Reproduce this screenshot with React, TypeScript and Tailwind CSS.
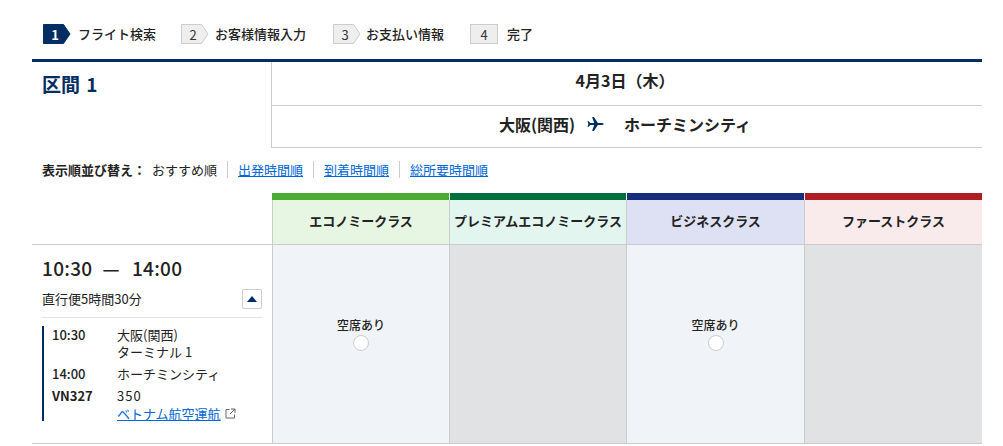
import React from "react";

const font = "font-['Noto_Sans_CJK_JP','Noto_Sans',sans-serif]";

function Step({ n, label, active, last, textGap }: { n: number; label: string; active?: boolean; last?: boolean; textGap: string }) {
  return (
    <div className="flex items-center">
      <div className="relative flex h-[20px] w-[28px] items-center justify-center">
        {last ? (
          <div className="absolute inset-0 border border-[#cccccc] bg-[#eeeeee]" />
        ) : (
          <svg className="absolute left-0 top-0" width="28" height="20" viewBox="0 0 28 20">
            <path
              d="M0.5 0.5H20.5L27 10L20.5 19.5H0.5Z"
              fill={active ? "#002e62" : "#eeeeee"}
              stroke={active ? "#002e62" : "#cccccc"}
            />
          </svg>
        )}
        <span className={`relative text-[13px] leading-none ${active ? "pr-1 font-bold text-white" : last ? "text-[#333333]" : "pr-1 text-[#333333]"}`}>{n}</span>
      </div>
      <span className={`${textGap} pb-[2px] text-[13px] font-medium leading-none text-[#222222]`}>{label}</span>
    </div>
  );
}

function ClassCol({ bar, bg, label, first }: { bar: string; bg: string; label: string; first?: boolean }) {
  return (
    <div className="flex flex-col">
      <div className={`h-[7px] ${bar} ${first ? "" : "ml-px"}`} />
      <div className={`flex h-[44px] items-center justify-center whitespace-nowrap border-l border-[#cccccc] pb-[3px] text-[13px] font-bold text-[#222222] ${bg}`}>
        {label}
      </div>
    </div>
  );
}

function Seat({ open }: { open: boolean }) {
  return (
    <div className={`flex flex-col items-center justify-center border-l border-[#cccccc] pb-[21px] ${open ? "bg-[#f0f3f8]" : "bg-[#e1e2e4]"}`}>
      {open && (
        <>
          <span className="text-[12px] font-medium leading-[18px] text-[#222222]">空席あり</span>
          <span className="mt-[1px] h-[16px] w-[16px] rounded-full border border-[#cccccc] bg-white" />
        </>
      )}
    </div>
  );
}

function SortLink({ label }: { label: string }) {
  return (
    <a className="flex h-[17px] items-center border-l border-[#cccccc] pl-[10px] pr-[10px] text-[#0066d9] underline">{label}</a>
  );
}

export default function App() {
  return (
    <div className={`h-[446px] w-[1003px] overflow-hidden bg-white text-[#222222] ${font}`}>
      <div className="ml-[32px] w-[950px]">
        <div className="flex h-[59px] items-center pl-[11px] pt-[9px]">
          <Step n={1} label="フライト検索" active textGap="ml-[7px]" />
          <div className="w-[25px]" />
          <Step n={2} label="お客様情報入力" textGap="ml-[6px]" />
          <div className="w-[27px]" />
          <Step n={3} label="お支払い情報" textGap="ml-[5px]" />
          <div className="w-[26px]" />
          <Step n={4} label="完了" last textGap="ml-[9px]" />
        </div>

        <div className="grid grid-cols-[239px_1fr] border-t-[3px] border-[#002e62]">
          <div className="pl-[10px] pt-[8px] text-[19px] font-bold leading-[28px] text-[#002e62] [word-spacing:2px]">区間 1</div>
          <div className="border-l border-[#cccccc]">
            <div className="flex h-[44px] items-center justify-center border-b border-[#cccccc] pb-[7px] pr-[4px] text-[16px] font-bold">4月3日（木）</div>
            <div className="flex h-[42px] items-center justify-center border-b border-[#cccccc] pb-[6px] pr-[4px] text-[16px] font-bold">
              <span>大阪(関西)</span>
              <svg className="ml-[12px] mr-[20px]" width="17" height="16" viewBox="0 0 18 16" fill="#002e62">
                <path d="M17.500 8c0-.6-.7-1-1.600-1h-4.400L7.300.5H5.400L7.600 7H3.400L1.900 5H.5l1 3-1 3h1.400l1.500-2h4.200L5.400 15.500h1.900L11.500 9h4.400c.9 0 1.600-.4 1.600-1z" />
              </svg>
              <span>ホーチミンシティ</span>
            </div>
          </div>
        </div>

        <div className="flex h-[44px] items-center pb-[2px] pl-[10px] text-[13px] leading-none">
          <span className="font-bold">表示順並び替え：</span>
          <span className="ml-[6px] pr-[10px]">おすすめ順</span>
          <SortLink label="出発時間順" />
          <SortLink label="到着時間順" />
          <SortLink label="総所要時間順" />
        </div>

        <div className="grid grid-cols-[240px_177px_177px_178px_178px] border-b border-[#cccccc] pt-[1px]">
          <div />
          <ClassCol bar="bg-[#4aac32]" bg="bg-[#e7f5e3]" label="エコノミークラス" first />
          <ClassCol bar="bg-[#006f3e]" bg="bg-[#e2f5ee]" label="プレミアムエコノミークラス" />
          <ClassCol bar="bg-[#182d7c]" bg="bg-[#dde1f3]" label="ビジネスクラス" />
          <ClassCol bar="bg-[#ae1f24]" bg="bg-[#f9ebeb]" label="ファーストクラス" />
        </div>

        <div className="grid h-[199px] grid-cols-[240px_177px_177px_178px_178px] border-b border-[#cccccc]">
          <div className="pl-[10px] pr-[10px] pt-[10px]">
            <div className="flex text-[19px] font-medium leading-[26px] tracking-[0.3px]">
              <span>10:30</span>
              <span className="ml-[10px] mr-[12px]">—</span>
              <span>14:00</span>
            </div>
            <div className="mt-[8px] flex h-[29px] items-center justify-between border-b border-[#e3e3e3] pb-[8px]">
              <span className="text-[13px]">直行便5時間30分</span>
              <span className="flex h-[20px] w-[20px] items-center justify-center rounded-[2px] border border-[#cccccc] bg-white">
                <svg width="10" height="6" viewBox="0 0 10 6"><path d="M5 0L10 6H0Z" fill="#002e62" /></svg>
              </span>
            </div>
            <div className="mt-[10px] h-[95px] border-l-[2px] border-[#002e62] pl-[8px] text-[13px] leading-[17px]">
              <div className="-mt-[2px] grid grid-cols-[65px_1fr] gap-y-[5px]">
                <span className="font-medium">10:30</span>
                <span>大阪(関西)<br />ターミナル 1</span>
                <span className="font-medium">14:00</span>
                <span>ホーチミンシティ</span>
                <span className="font-bold">VN327</span>
                <span>
                  <span className="tracking-[1px]">350</span>
                  <br />
                  <span className="mt-[1px] flex items-center whitespace-nowrap">
                    <a className="text-[#0066d9] underline">ベトナム航空運航</a>
                    <svg className="ml-[4px]" width="11" height="11" viewBox="0 0 11 11" fill="none" stroke="#666666" strokeWidth="1">
                      <path d="M4.500 1.500H1V10H9.500V6.500M6 1H10V5M10 1L5 6" />
                    </svg>
                  </span>
                </span>
              </div>
            </div>
          </div>
          <Seat open />
          <Seat open={false} />
          <Seat open />
          <Seat open={false} />
        </div>
      </div>
    </div>
  );
}
